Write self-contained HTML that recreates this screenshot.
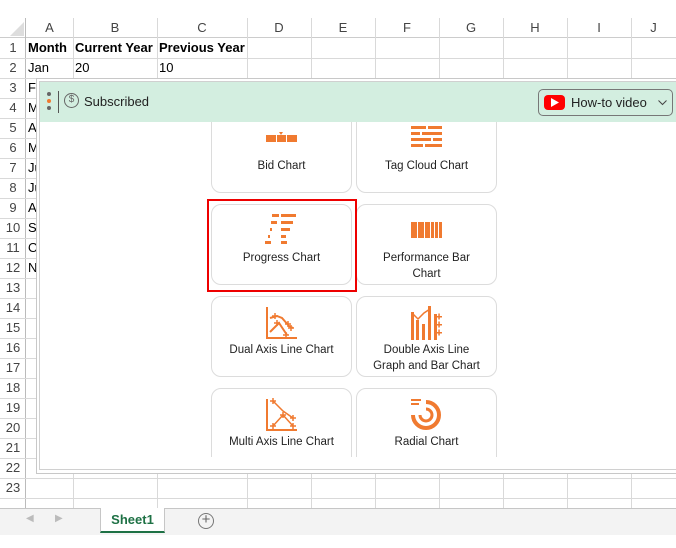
<!DOCTYPE html>
<html><head><style>
*{margin:0;padding:0;box-sizing:border-box}
body{width:676px;height:548px;background:#fff;font-family:"Liberation Sans",Calibri,sans-serif;position:relative;overflow:hidden;font-size:13px;color:#000}
.a{position:absolute}
.vl{position:absolute;top:18px;width:1px;height:490px;background:#d9d9d9}
.hl{position:absolute;left:0;width:676px;height:1px;background:#d9d9d9}
.ch{position:absolute;top:18px;height:20px;line-height:20px;text-align:center;color:#444;font-size:13px}
.rn{position:absolute;left:0;width:26px;text-align:center;color:#444;font-size:13px;height:20px;line-height:20px}
.c{position:absolute;height:20px;line-height:20px;font-size:13px;padding-left:2px;white-space:nowrap;overflow:hidden}
.card{position:absolute;width:141px;border:1px solid #dcdcdc;border-radius:10px;background:#fff;text-align:center;font-size:11.5px;color:#222;line-height:16px}
</style></head><body>
<div class="a" style="left:0;top:18px;width:676px;height:20px;background:#fff;border-bottom:1px solid #ccc"></div>
<svg class="a" style="left:10px;top:22px" width="14" height="14"><path d="M14 0 L14 14 L0 14Z" fill="#ddd"/></svg>
<div class="ch" style="left:26px;width:47px">A</div>
<div class="ch" style="left:73px;width:84px">B</div>
<div class="ch" style="left:157px;width:90px">C</div>
<div class="ch" style="left:247px;width:64px">D</div>
<div class="ch" style="left:311px;width:64px">E</div>
<div class="ch" style="left:375px;width:64px">F</div>
<div class="ch" style="left:439px;width:64px">G</div>
<div class="ch" style="left:503px;width:64px">H</div>
<div class="ch" style="left:567px;width:64px">I</div>
<div class="ch" style="left:631px;width:45px">J</div>
<div class="vl" style="left:25px;background:#bbb"></div>
<div class="vl" style="left:73px"></div><div class="vl" style="left:157px"></div><div class="vl" style="left:247px"></div><div class="vl" style="left:311px"></div><div class="vl" style="left:375px"></div><div class="vl" style="left:439px"></div><div class="vl" style="left:503px"></div><div class="vl" style="left:567px"></div><div class="vl" style="left:631px"></div>
<div class="hl" style="top:58px"></div><div class="hl" style="top:78px"></div><div class="hl" style="top:98px"></div><div class="hl" style="top:118px"></div><div class="hl" style="top:138px"></div><div class="hl" style="top:158px"></div><div class="hl" style="top:178px"></div><div class="hl" style="top:198px"></div><div class="hl" style="top:218px"></div><div class="hl" style="top:238px"></div><div class="hl" style="top:258px"></div><div class="hl" style="top:278px"></div><div class="hl" style="top:298px"></div><div class="hl" style="top:318px"></div><div class="hl" style="top:338px"></div><div class="hl" style="top:358px"></div><div class="hl" style="top:378px"></div><div class="hl" style="top:398px"></div><div class="hl" style="top:418px"></div><div class="hl" style="top:438px"></div><div class="hl" style="top:458px"></div><div class="hl" style="top:478px"></div><div class="hl" style="top:498px"></div>
<div class="rn" style="top:38px">1</div><div class="rn" style="top:58px">2</div><div class="rn" style="top:78px">3</div><div class="rn" style="top:98px">4</div><div class="rn" style="top:118px">5</div><div class="rn" style="top:138px">6</div><div class="rn" style="top:158px">7</div><div class="rn" style="top:178px">8</div><div class="rn" style="top:198px">9</div><div class="rn" style="top:218px">10</div><div class="rn" style="top:238px">11</div><div class="rn" style="top:258px">12</div><div class="rn" style="top:278px">13</div><div class="rn" style="top:298px">14</div><div class="rn" style="top:318px">15</div><div class="rn" style="top:338px">16</div><div class="rn" style="top:358px">17</div><div class="rn" style="top:378px">18</div><div class="rn" style="top:398px">19</div><div class="rn" style="top:418px">20</div><div class="rn" style="top:438px">21</div><div class="rn" style="top:458px">22</div><div class="rn" style="top:478px">23</div>
<div class="c" style="left:26px;top:38px;font-weight:bold">Month</div>
<div class="c" style="left:73px;top:38px;font-weight:bold">Current Year</div>
<div class="c" style="left:157px;top:38px;font-weight:bold">Previous Year</div>
<div class="c" style="left:26px;top:58px">Jan</div><div class="c" style="left:73px;top:58px">20</div><div class="c" style="left:157px;top:58px">10</div>
<div class="c" style="left:26px;top:78px;width:12px">F</div><div class="c" style="left:26px;top:98px;width:12px">M</div><div class="c" style="left:26px;top:118px;width:12px">A</div><div class="c" style="left:26px;top:138px;width:12px">M</div><div class="c" style="left:26px;top:158px;width:12px">Ju</div><div class="c" style="left:26px;top:178px;width:12px">Ju</div><div class="c" style="left:26px;top:198px;width:12px">A</div><div class="c" style="left:26px;top:218px;width:12px">S</div><div class="c" style="left:26px;top:238px;width:12px">O</div><div class="c" style="left:26px;top:258px;width:12px">N</div>
<div class="a" style="left:36px;top:78px;width:640px;height:396px;border:1px solid #c8c8c8;border-right:none;background:#fff"></div>
<div class="a" style="left:39px;top:81px;width:637px;height:389px;border:1px solid #d0d0d0;border-right:none;background:#fff"></div>
<div class="a" style="left:40px;top:82px;width:636px;height:40px;background:#d3eee0"></div>
<div class="a" style="left:47px;top:92px;width:4px;height:4px;border-radius:2px;background:#666"></div>
<div class="a" style="left:47px;top:99px;width:4px;height:4px;border-radius:2px;background:#f07a30"></div>
<div class="a" style="left:47px;top:106px;width:4px;height:4px;border-radius:2px;background:#666"></div>
<div class="a" style="left:58px;top:91px;width:1px;height:22px;background:#555"></div>
<div class="a" style="left:64px;top:93px;width:15px;height:15px;border:1.5px solid #666;border-radius:50%;font-size:10px;line-height:12px;text-align:center;color:#666">$</div>
<div class="a" style="left:84px;top:94px;font-size:13px;color:#222">Subscribed</div>
<div class="a" style="left:538px;top:89px;width:135px;height:27px;border:1px solid #777;border-radius:5px"></div>
<div class="a" style="left:544px;top:95px;width:21px;height:15px;background:#f00;border-radius:4px"></div>
<svg class="a" style="left:551px;top:98px" width="8" height="9"><path d="M0 0L8 4.5L0 9Z" fill="#fff"/></svg>
<div class="a" style="left:571px;top:95px;font-size:13px;color:#222">How-to video</div>
<svg class="a" style="left:658px;top:100px" width="9" height="6"><path d="M0.5 0.5L4.5 4.5L8.5 0.5" stroke="#444" fill="none"/></svg>
<div class="a" style="left:40px;top:122px;width:636px;height:335px;overflow:hidden">
 <div class="card" style="left:171px;top:-10px;height:81px;padding-top:45px">Bid Chart</div>
 <div class="card" style="left:316px;top:-10px;height:81px;padding-top:45px">Tag Cloud Chart</div>
 <div class="card" style="left:171px;top:82px;height:81px;padding-top:45px">Progress Chart</div>
 <div class="card" style="left:316px;top:82px;height:81px;padding-top:45px">Performance Bar<br>Chart</div>
 <div class="card" style="left:171px;top:174px;height:81px;padding-top:45px">Dual Axis Line Chart</div>
 <div class="card" style="left:316px;top:174px;height:81px;padding-top:45px">Double Axis Line<br>Graph and Bar Chart</div>
 <div class="card" style="left:171px;top:266px;height:81px;padding-top:45px">Multi Axis Line Chart</div>
 <div class="card" style="left:316px;top:266px;height:81px;padding-top:45px">Radial Chart</div>
</div>
<svg class="a" style="left:265px;top:130px" width="34" height="14"><g fill="#f07a30"><rect x="1" y="5" width="10" height="7"/><rect x="12" y="5" width="9" height="7"/><rect x="22" y="5" width="10" height="7"/><path d="M14 2h4l-2 3z"/></g></svg>
<svg class="a" style="left:410px;top:125px" width="34" height="26"><g fill="#f07a30"><rect x="1" y="1" width="15" height="3"/><rect x="18" y="1" width="14" height="3"/><rect x="1" y="7" width="9" height="3"/><rect x="12" y="7" width="20" height="3"/><rect x="1" y="13" width="20" height="3"/><rect x="23" y="13" width="9" height="3"/><rect x="1" y="19" width="12" height="3"/><rect x="15" y="19" width="17" height="3"/></g></svg>
<svg class="a" style="left:264px;top:213px" width="36" height="32"><g fill="#f07a30"><rect x="8" y="1" width="7" height="3"/><rect x="17" y="1" width="15" height="3"/><rect x="7" y="8" width="6" height="3"/><rect x="17" y="8" width="12" height="3"/><rect x="6" y="15" width="2" height="3"/><rect x="17" y="15" width="9" height="3"/><rect x="4" y="22" width="2" height="3"/><rect x="17" y="22" width="5" height="3"/><rect x="1" y="28" width="6" height="3"/><rect x="17" y="28" width="6" height="3"/></g></svg>
<svg class="a" style="left:410px;top:222px" width="34" height="16"><g fill="#f07a30"><rect x="1" y="0" width="6" height="16"/><rect x="8" y="0" width="6" height="16"/><rect x="15" y="0" width="5" height="16"/><rect x="21" y="0" width="3" height="16"/><rect x="25" y="0" width="3" height="16"/><rect x="29" y="0" width="3" height="16"/></g></svg>
<svg class="a" style="left:265px;top:306px" width="34" height="34" fill="none" stroke="#f07a30" stroke-width="2"><path d="M2 1V32H32"/><path d="M5 12L12 10L17 12L24 20L28 22M5 26L14 17L22 29"/><path d="M10 7v6M7 10h6M23 15v6M20 18h6M26 19v6M23 22h6M12 14v6M9 17h6M21 26v6M18 29h6" stroke-width="1.5"/></svg>
<svg class="a" style="left:410px;top:306px" width="34" height="34" fill="#f07a30"><rect x="1" y="6" width="3" height="28"/><rect x="6" y="14" width="3" height="20"/><rect x="12" y="18" width="3" height="16"/><rect x="18" y="0" width="3" height="34"/><rect x="24" y="8" width="3" height="26"/><path d="M2 7L8 13L14 7L20 3" stroke="#f07a30" stroke-width="1.5" fill="none"/><path d="M26 10h6v1.5h-6zM28.3 7.5h1.5v6h-1.5zM26 18h6v1.5h-6zM28.3 15.5h1.5v6h-1.5zM26 26h6v1.5h-6zM28.3 23.5h1.5v6h-1.5z"/></svg>
<svg class="a" style="left:265px;top:398px" width="34" height="34" fill="none" stroke="#f07a30" stroke-width="2"><path d="M2 1V32H32"/><path d="M8 3L18 13L28 20M8 28L18 17L28 28" stroke-width="1.5"/><path d="M8 0v6M5 3h6M28 17v6M25 20h6M8 25v6M5 28h6M28 25v6M25 28h6M18 14v6M15 17h6" stroke-width="1.5"/></svg>
<svg class="a" style="left:409px;top:398px" width="34" height="34" fill="none" stroke="#f07a30"><path d="M2 2h10M2 6h8" stroke-width="2"/><path d="M17 4A13 13 0 1 1 4 17" stroke-width="4"/><path d="M17 11A6 6 0 1 1 11 17" stroke-width="3"/></svg>
<div class="a" style="left:207px;top:199px;width:150px;height:93px;border:2px solid #e00"></div>
<div class="a" style="left:0;top:508px;width:676px;height:27px;background:#f3f3f3;border-top:1px solid #c6c6c6"></div>
<div class="a" style="left:0;top:535px;width:676px;height:13px;background:#fff"></div>
<div class="a" style="left:26px;top:513px;color:#bbb;font-size:10px">◀</div>
<div class="a" style="left:55px;top:513px;color:#bbb;font-size:10px">▶</div>
<div class="a" style="left:100px;top:508px;width:65px;height:25px;background:#fff;border:1px solid #c6c6c6;border-top:none;border-bottom:2px solid #1e7145;text-align:center;color:#1e7145;font-weight:bold;font-size:13px;line-height:24px">Sheet1</div>
<div class="a" style="left:198px;top:513px;width:16px;height:16px;border:1.5px solid #777;border-radius:50%;text-align:center;line-height:12px;color:#666;font-size:15px">+</div>
</body></html>
